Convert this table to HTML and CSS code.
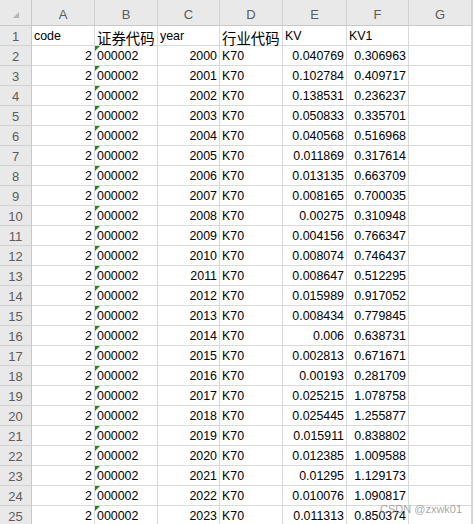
FILE: index.html
```html
<!DOCTYPE html>
<html>
<head>
<meta charset="utf-8">
<link rel="stylesheet" href="styles.css">
</head>
<body>
<div class="sheet" id="sheet">
  <div class="hd corner"><span class="tri"></span></div>
  <div class="hd col">A</div>
  <div class="hd col">B</div>
  <div class="hd col">C</div>
  <div class="hd col">D</div>
  <div class="hd col">E</div>
  <div class="hd col">F</div>
  <div class="hd col">G</div>

  <div class="hd rn">1</div>
  <div class="c">code</div>
  <div class="c"><span class="cjk">证券代码</span></div>
  <div class="c">year</div>
  <div class="c"><span class="cjk">行业代码</span></div>
  <div class="c">KV</div>
  <div class="c">KV1</div>
  <div class="c"></div>
</div>
<div class="wm">CSDN @zxwk01</div>
<script src="script.js"></script>
</body>
</html>
```

FILE: script.js
```js
var data = [
  [2000, "0.040769", "0.306963"],
  [2001, "0.102784", "0.409717"],
  [2002, "0.138531", "0.236237"],
  [2003, "0.050833", "0.335701"],
  [2004, "0.040568", "0.516968"],
  [2005, "0.011869", "0.317614"],
  [2006, "0.013135", "0.663709"],
  [2007, "0.008165", "0.700035"],
  [2008, "0.00275", "0.310948"],
  [2009, "0.004156", "0.766347"],
  [2010, "0.008074", "0.746437"],
  [2011, "0.008647", "0.512295"],
  [2012, "0.015989", "0.917052"],
  [2013, "0.008434", "0.779845"],
  [2014, "0.006", "0.638731"],
  [2015, "0.002813", "0.671671"],
  [2016, "0.00193", "0.281709"],
  [2017, "0.025215", "1.078758"],
  [2018, "0.025445", "1.255877"],
  [2019, "0.015911", "0.838802"],
  [2020, "0.012385", "1.009588"],
  [2021, "0.01295", "1.129173"],
  [2022, "0.010076", "1.090817"],
  [2023, "0.011313", "0.850374"]
];
var sheet = document.getElementById("sheet");
var html = "";
data.forEach(function (r, i) {
  html += '<div class="hd rn">' + (i + 2) + '</div>' +
    '<div class="c r">2</div>' +
    '<div class="c"><span class="flag"></span>000002</div>' +
    '<div class="c r">' + r[0] + '</div>' +
    '<div class="c">K70</div>' +
    '<div class="c r">' + r[1] + '</div>' +
    '<div class="c r">' + r[2] + '</div>' +
    '<div class="c"></div>';
});
sheet.insertAdjacentHTML("beforeend", html);
```

FILE: styles.css
```css
html, body {
  margin: 0;
  padding: 0;
  background: #ffffff;
  overflow: hidden;
}
body {
  width: 474px;
  height: 524px;
  position: relative;
  font-family: "Liberation Sans", Arial, sans-serif;
}
.sheet {
  display: grid;
  grid-template-columns: 32px 63px 63px 62px 63px 64px 62px 63px;
  grid-template-rows: 26px repeat(25, 20px);
  width: 472px;
  border-right: 1px solid #d4d4d4;
}
.hd {
  background: #e9e9e9;
  color: #5c5c5c;
  font-size: 13px;
  display: flex;
  align-items: center;
  justify-content: center;
  box-sizing: border-box;
  border-right: 1px solid #d2d2d2;
  border-bottom: 1px solid #d2d2d2;
}
.col {
  padding-top: 3px;
  border-bottom-color: #c8c8c8;
}
.rn {
  padding-top: 1px;
  border-right-color: #c8c8c8;
}
.corner {
  align-items: flex-start;
  justify-content: flex-start;
  padding: 12px 0 0 13px;
  border-bottom-color: #c8c8c8;
  border-right-color: #c8c8c8;
}
.tri {
  width: 0;
  height: 0;
  border-bottom: 6px solid #b5b5b5;
  border-left: 6px solid transparent;
}
.c {
  position: relative;
  box-sizing: border-box;
  border-right: 1px solid #dadada;
  border-bottom: 1px solid #dadada;
  font-size: 12.4px;
  line-height: 17px;
  padding: 2px 2px 0 2px;
  color: #000;
  white-space: nowrap;
  overflow: visible;
  background: #fff;
}
.c.r {
  text-align: right;
}
.cjk {
  font-family: "Noto Sans CJK SC", sans-serif;
  font-size: 14.4px;
  position: relative;
  top: 1px;
}
.flag {
  position: absolute;
  left: 0;
  top: 0;
  width: 0;
  height: 0;
  border-top: 5px solid #1e8a1e;
  border-right: 5px solid transparent;
}
.wm {
  position: absolute;
  left: 380px;
  top: 503px;
  font-size: 11px;
  color: rgba(150, 150, 150, 0.85);
  white-space: nowrap;
}
```
